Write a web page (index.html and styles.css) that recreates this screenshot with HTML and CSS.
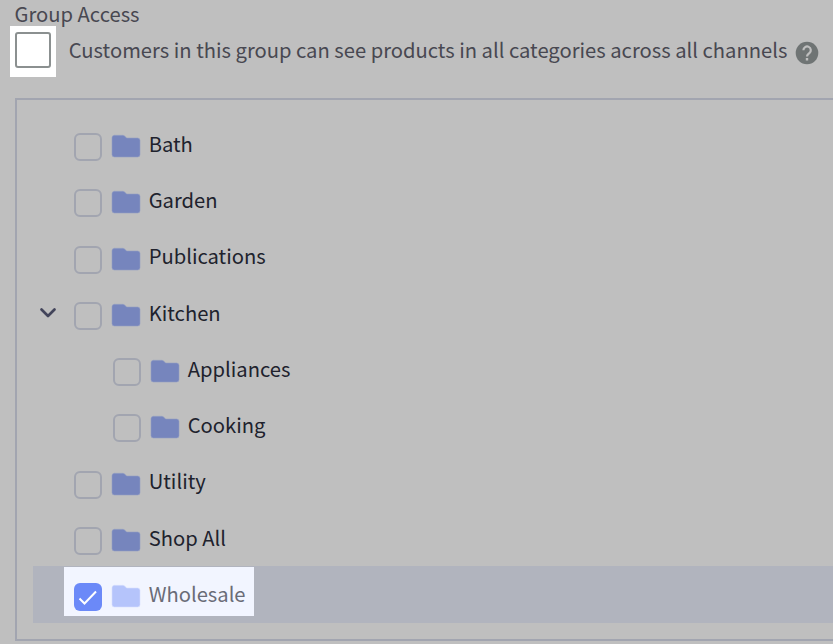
FILE: index.html
```
<!DOCTYPE html>
<html lang="en">
<head>
  <meta charset="UTF-8">
  <meta name="viewport" content="width=device-width, initial-scale=1.0">
  <title>Group Access</title>
  <link rel="stylesheet" href="styles.css">
</head>
<body>
  <svg class="sprite" width="0" height="0">
    <symbol id="folder" viewBox="0 0 30 24">
      <path d="M3.500 1.300h8.300c.8 0 1.400.3 1.900.8L15.600 4H26.500a2.500 2.500 0 0 1 2.500 2.500V20.500a2.500 2.500 0 0 1-2.500 2.500H3.500a2.500 2.500 0 0 1-2.500-2.500V3.800A2.500 2.500 0 0 1 3.500 1.300z"/>
    </symbol>
  </svg>

  <h1 class="title">Group Access</h1>
  <div class="access">
    <span class="access-spot"><span class="access-check"></span></span>
    <span class="access-label">Customers in this group can see products in all categories across all channels</span>
    <svg class="help" viewBox="0 0 24 24">
      <circle cx="12" cy="12" r="11.300" fill="#6f7474"/>
      <path d="M8.400 9.200a3.700 3.700 0 1 1 6 2.900c-1.300 1-2.400 1.600-2.400 3.400" fill="none" stroke="#bfbfbf" stroke-width="2.200"/>
      <rect x="10.800" y="17" width="2.400" height="2.500" fill="#bfbfbf"/>
    </svg>
  </div>

  <div class="tree">
    <div class="row"><span class="check"></span><svg class="folder"><use href="#folder"/></svg><span class="name">Bath</span></div>
    <div class="row"><span class="check"></span><svg class="folder"><use href="#folder"/></svg><span class="name">Garden</span></div>
    <div class="row"><span class="check"></span><svg class="folder"><use href="#folder"/></svg><span class="name">Publications</span></div>
    <div class="row parent">
      <svg class="chevron" viewBox="0 0 18 12"><path d="M2.500 2.500 9 9l6.500-6.500"/></svg>
      <span class="check"></span><svg class="folder"><use href="#folder"/></svg><span class="name">Kitchen</span>
    </div>
    <div class="row child"><span class="check"></span><svg class="folder"><use href="#folder"/></svg><span class="name">Appliances</span></div>
    <div class="row child"><span class="check"></span><svg class="folder"><use href="#folder"/></svg><span class="name">Cooking</span></div>
    <div class="row"><span class="check"></span><svg class="folder"><use href="#folder"/></svg><span class="name">Utility</span></div>
    <div class="row"><span class="check"></span><svg class="folder"><use href="#folder"/></svg><span class="name">Shop All</span></div>
    <div class="row selected">
      <div class="spot">
        <span class="check checked"><svg viewBox="0 0 28 28"><path d="M5.500 15.500l5 5L22 8.500"/></svg></span>
        <svg class="folder"><use href="#folder"/></svg><span class="name">Wholesale</span>
      </div>
    </div>
  </div>
</body>
</html>
```
FILE: styles.css
```
* {
  box-sizing: border-box;
}
body {
  margin: 0;
  height: 644px;
  overflow: hidden;
  background: #bfbfbf;
  color: #20222d;
  font-family: "Noto Sans CJK SC", "Noto Sans", sans-serif;
  font-size: 20.2px;
  line-height: 28px;
}
.sprite {
  display: block;
}
.title {
  margin: 0;
  height: 26px;
  padding-left: 14.5px;
  font-size: 20.2px;
  font-weight: 400;
  line-height: 28px;
  color: #484851;
}
.access {
  display: flex;
  align-items: center;
  height: 51px;
  padding-left: 10px;
  color: #484851;
  white-space: nowrap;
}
.access-spot {
  width: 46px;
  height: 51px;
  padding: 6px 5px;
  background: #fff;
}
.access-check {
  display: block;
  width: 36px;
  height: 36px;
  border: 2px solid #8b9090;
  border-radius: 3px;
}
.access-label {
  width: 726px;
  padding: 0 0 3px 12.7px;
}
.help {
  width: 24px;
  height: 24px;
  margin: 2px 0 0 12.5px;
}

/* category tree, runs off the right edge */
.tree {
  height: 543px;
  margin: 21px 0 0 15px;
  padding: 16px 0 16px 16px;
  border: 2px solid #a2a5b0;
  border-right: 0;
}
.row {
  display: flex;
  align-items: flex-start;
  height: 56.25px;
  padding: 17px 0 0 41px;
}
.row.parent {
  padding-left: 6px;
}
.row.child {
  padding-left: 80px;
}
.check {
  flex: none;
  width: 28px;
  height: 28px;
  border: 2px solid #a2a5b0;
  border-radius: 6px;
}
.folder {
  flex: none;
  width: 30px;
  height: 24px;
  margin: 1px 7.7px 0 9px;
  fill: #7685bd;
  stroke: #94a0c4;
  stroke-width: .6;
}
.name {
  margin-top: -3.25px;
}
.chevron {
  width: 18px;
  height: 12px;
  margin: 5.5px 17px 0 0;
  fill: none;
  stroke: #42445a;
  stroke-width: 2.7;
  stroke-linecap: round;
  stroke-linejoin: round;
}
.row.selected {
  height: 57px;
  padding: 1px 0 0 31px;
  background: #b1b4be;
}
.spot {
  display: flex;
  align-items: flex-start;
  width: 190px;
  height: 49px;
  padding: 16px 0 0 10px;
  background: #f2f5ff;
  color: #6a6c77;
}
.spot .folder {
  fill: #b5c4fb;
  stroke: #d6dfff;
}
.checked {
  border: 0;
  background: #6b89f8;
}
.checked svg {
  display: block;
  fill: none;
  stroke: #fff;
  stroke-width: 2;
}
```
